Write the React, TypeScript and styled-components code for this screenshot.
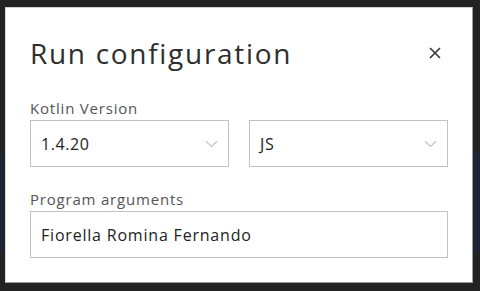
import styled, { createGlobalStyle } from "styled-components";

const GlobalStyle = createGlobalStyle`
  html, body {
    margin: 0;
    padding: 0;
    background: #232323;
  }
  body {
    font-family: "Open Sans", "Liberation Sans", sans-serif;
  }
`;

function Chevron() {
  return (
    <svg width="13" height="8" viewBox="0 0 13 8" fill="none">
      <path d="M1 1.2 L6.5 6.5 L12 1.2" stroke="#c4c4c4" strokeWidth="1.2" />
    </svg>
  );
}

function CloseIcon() {
  return (
    <svg width="12" height="12" viewBox="0 0 12 12" fill="none">
      <path d="M1 1 L11 11 M11 1 L1 11" stroke="#333" strokeWidth="1.6" />
    </svg>
  );
}

function App() {
  return (
    <Page>
      <GlobalStyle />
      <Band />
      <Modal>
        <Header>
          <Title>Run configuration</Title>
          <CloseButton aria-label="Close">
            <CloseIcon />
          </CloseButton>
        </Header>
        <Field>
          <Label>Kotlin Version</Label>
          <Row>
            <Select>
              <span>1.4.20</span>
              <Chevron />
            </Select>
            <Select>
              <span>JS</span>
              <Chevron />
            </Select>
          </Row>
        </Field>
        <Field>
          <Label>Program arguments</Label>
          <Input>Fiorella Romina Fernando</Input>
        </Field>
      </Modal>
    </Page>
  );
}

const Page = styled.div`
  position: relative;
  width: 480px;
  height: 291px;
  overflow: hidden;
  background: #232323;
  padding-top: 153px;
  box-sizing: border-box;
`;

const Band = styled.div`
  height: 100px;
  background: #1f2433;
`;

const Modal = styled.div`
  position: absolute;
  left: 5px;
  top: 7px;
  width: 468px;
  height: 276px;
  box-sizing: border-box;
  background: #fff;
  border: 1px solid #9c9c9c;
  border-top-color: #cfcfcf;
  border-left-color: #d8d8d8;
  padding: 28px 24px 0 24px;
  display: flex;
  flex-direction: column;
`;

const Header = styled.div`
  display: flex;
  align-items: center;
  justify-content: space-between;
  margin-bottom: 28px;
`;

const Title = styled.h2`
  margin: 0;
  font-size: 28px;
  line-height: 34px;
  font-weight: 400;
  color: #2e2e2e;
  letter-spacing: 1.7px;
`;

const CloseButton = styled.button`
  border: none;
  background: none;
  padding: 0;
  margin-right: 7px;
  display: flex;
  cursor: pointer;
`;

const Field = styled.div`
  display: flex;
  flex-direction: column;
  margin-bottom: 22px;
`;

const Label = styled.div`
  font-size: 15px;
  line-height: 20px;
  color: #555;
  letter-spacing: 0.8px;
  margin-bottom: 2px;
`;

const Row = styled.div`
  display: flex;
  gap: 20px;
`;

const Select = styled.div`
  flex: 1;
  height: 47px;
  box-sizing: border-box;
  border: 1px solid #c2c2c2;
  display: flex;
  align-items: center;
  justify-content: space-between;
  padding: 0 10px 0 10px;
  font-size: 16px;
  letter-spacing: 0.6px;
  color: #222;
`;

const Input = styled.div`
  height: 47px;
  box-sizing: border-box;
  border: 1px solid #c2c2c2;
  display: flex;
  align-items: center;
  padding: 0 10px;
  font-size: 16px;
  letter-spacing: 0.8px;
  color: #222;
`;

export default App;
